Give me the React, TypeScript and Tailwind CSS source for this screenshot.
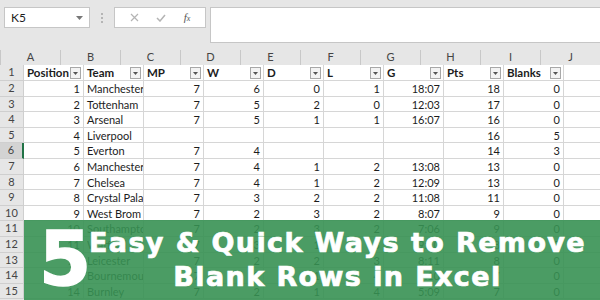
const cols = ['A', 'B', 'C', 'D', 'E', 'F', 'G', 'H', 'I', 'J'];
const heads = ['Position', 'Team', 'MP', 'W', 'D', 'L', 'G', 'Pts', 'Blanks'];

const rows: string[][] = [
  ['1', 'Manchester City', '7', '6', '0', '1', '18:07', '18', '0'],
  ['2', 'Tottenham', '7', '5', '2', '0', '12:03', '17', '0'],
  ['3', 'Arsenal', '7', '5', '1', '1', '16:07', '16', '0'],
  ['4', 'Liverpool', '', '', '', '', '', '16', '5'],
  ['5', 'Everton', '7', '4', '', '', '', '14', '3'],
  ['6', 'Manchester United', '7', '4', '1', '2', '13:08', '13', '0'],
  ['7', 'Chelsea', '7', '4', '1', '2', '12:09', '13', '0'],
  ['8', 'Crystal Palace', '7', '3', '2', '2', '11:08', '11', '0'],
  ['9', 'West Brom', '7', '2', '3', '2', '8:07', '9', '0'],
  ['10', 'Southampton', '7', '2', '3', '2', '7:06', '9', '0'],
  ['11', 'Watford', '7', '3', '1', '3', '9:10', '8', '0'],
  ['12', 'Leicester', '7', '2', '2', '3', '8:11', '8', '0'],
  ['13', 'Bournemouth', '7', '2', '1', '4', '5:10', '7', '0'],
  ['14', 'Burnley', '7', '2', '1', '4', '5:09', '7', '0'],
];

const FilterBtn = () => (
  <span className="absolute right-[2px] top-[2px] w-[11px] h-[12px] border border-[#a8a8a8] bg-[#f3f3f3] flex items-center justify-center">
    <svg width="5" height="3" viewBox="0 0 5 3">
      <path d="M0 0h5L2.5 3z" fill="#555" />
    </svg>
  </span>
);

export default function App() {
  return (
    <div
      className="relative w-[600px] h-[300px] overflow-hidden bg-[#e6e6e6] text-[#1c1c1c]"
      style={{ fontFamily: 'Lato, "Open Sans", sans-serif' }}
    >
      {/* formula bar */}
      <div className="flex items-start h-[50px] pt-[7px] pl-[4px]">
        <div className="w-[86px] h-[21px] bg-white border border-[#c6c6c6] flex items-center justify-between pl-[6px] pr-[6px] text-[12px]">
          <span>K5</span>
          <svg width="7" height="4" viewBox="0 0 7 4">
            <path d="M0 0h7L3.5 4z" fill="#777" />
          </svg>
        </div>
        <div className="w-[24px] h-[21px] flex flex-col items-center justify-center gap-[2px]">
          <span className="w-[2px] h-[2px] bg-[#b5b5b5]" />
          <span className="w-[2px] h-[2px] bg-[#b5b5b5]" />
          <span className="w-[2px] h-[2px] bg-[#b5b5b5]" />
        </div>
        <div className="w-[92px] h-[21px] bg-white border border-[#c6c6c6] flex items-center justify-around px-[6px]">
          <svg width="9" height="9" viewBox="0 0 9 9">
            <path d="M1 1l7 7M8 1l-7 7" stroke="#b4b4b4" strokeWidth="1.2" />
          </svg>
          <svg width="10" height="8" viewBox="0 0 10 8">
            <path d="M1 4l3 3 5-6" stroke="#b4b4b4" strokeWidth="1.5" fill="none" />
          </svg>
          <span
            className="text-[11px] italic text-[#555]"
            style={{ fontFamily: '"Liberation Serif", serif' }}
          >
            f<span className="text-[8px]">x</span>
          </span>
        </div>
        <div className="ml-[4px] flex-1 h-[36px] bg-white border border-[#c6c6c6] border-r-0" />
      </div>

      {/* column headers */}
      <div className="flex h-[15px] text-[11px] text-[#444]">
        <div className="relative w-[24px] border-r border-[#c8c8c8]">
          <svg className="absolute right-[3px] bottom-[2px]" width="9" height="9" viewBox="0 0 9 9">
            <path d="M9 0v9H0z" fill="#c2c2c2" />
          </svg>
        </div>
        {cols.map((c) => (
          <div key={c} className="w-[60px] shrink-0 border-r border-[#c8c8c8] flex items-center justify-center">
            {c}
          </div>
        ))}
      </div>

      {/* grid */}
      <div className="text-[11px]">
        <div className="flex h-[16px]">
          <div className="w-[24px] shrink-0 bg-[#e6e6e6] border-r border-b border-[#cfcfcf] text-[#444] text-[11px] flex items-center justify-center">
            1
          </div>
          {heads.map((h) => (
            <div key={h} className="relative w-[60px] shrink-0 bg-white border-r border-b border-[#d6d6d6] pl-[3px] text-[11.5px] font-bold leading-[15px] overflow-hidden whitespace-nowrap">
              {h}
              <FilterBtn />
            </div>
          ))}
          <div className="w-[60px] shrink-0 bg-white border-b border-[#d6d6d6]" />
        </div>
        {rows.map((r, i) => (
          <div key={i} className="flex h-[15.6px]">
            <div
              className={
                i === 4
                  ? 'w-[24px] shrink-0 bg-[#d3d3d3] border-r-2 border-b border-r-[#217346] border-b-[#cfcfcf] text-[#444] text-[11px] flex items-center justify-center'
                  : 'w-[24px] shrink-0 bg-[#e6e6e6] border-r border-b border-[#cfcfcf] text-[#444] text-[11px] flex items-center justify-center'
              }
            >
              {i + 2}
            </div>
            {r.map((v, j) => (
              <div
                key={j}
                className={
                  j === 1
                    ? 'w-[60px] shrink-0 bg-white border-r border-b border-[#d6d6d6] pl-[3px] leading-[16px] overflow-hidden whitespace-nowrap'
                    : 'w-[60px] shrink-0 bg-white border-r border-b border-[#d6d6d6] pr-[3px] text-right leading-[16px] overflow-hidden whitespace-nowrap'
                }
              >
                {v}
              </div>
            ))}
            <div className="w-[60px] shrink-0 bg-white border-b border-[#d6d6d6]" />
          </div>
        ))}
      </div>

      {/* title banner */}
      <div
        className="absolute left-[24px] right-0 top-[220px] bottom-0 bg-[#379153]/90 flex items-center pl-[15px] pr-[8px] text-white [-webkit-text-stroke:0.7px_white]"
        style={{ fontFamily: '"DejaVu Sans", sans-serif' }}
      >
        <div className="w-[44px] shrink-0 text-[75px] font-bold leading-none -mt-[2px] [-webkit-text-stroke:1.5px_white]">5</div>
        <div className="flex-1 min-w-0 flex flex-col items-center text-[27px] font-bold leading-[34px] tracking-[1.4px] whitespace-nowrap">
          <div>Easy &amp; Quick Ways to Remove</div>
          <div>Blank Rows in Excel</div>
        </div>
      </div>
    </div>
  );
}
